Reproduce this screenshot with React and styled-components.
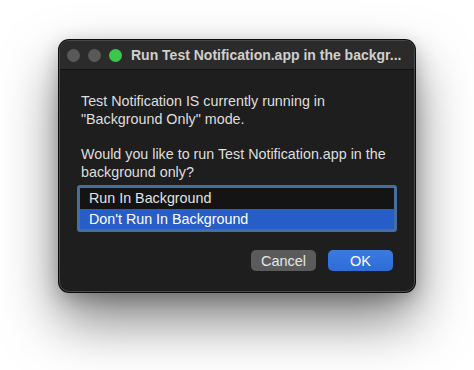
import styled, { createGlobalStyle } from "styled-components";

const GlobalStyle = createGlobalStyle`
  html, body {
    margin: 0;
    background: #ffffff;
  }
  body {
    font-family: "Liberation Sans", Arial, sans-serif;
  }
`;

const options = ["Run In Background", "Don't Run In Background"];

function App() {
  return (
    <Page>
      <GlobalStyle />
      <Window>
        <TitleBar>
          <Lights>
            <Light />
            <Light />
            <Light color="#3ec64c" />
          </Lights>
          <Title>Run Test Notification.app in the backgr...</Title>
        </TitleBar>
        <Body>
          <Message>
            Test Notification IS currently running in
            <br />
            "Background Only" mode.
          </Message>
          <Message>
            Would you like to run Test Notification.app in the
            <br />
            background only?
          </Message>
          <List>
            {options.map((opt, i) => (
              <Row key={opt} selected={i === 1}>
                {opt}
              </Row>
            ))}
          </List>
          <Buttons>
            <Button>Cancel</Button>
            <Button primary>OK</Button>
          </Buttons>
        </Body>
      </Window>
    </Page>
  );
}

export default App;

const Page = styled.div`
  width: 474px;
  height: 370px;
  padding: 40px 0 0 59px;
  box-sizing: border-box;
  overflow: hidden;
`;

const Window = styled.div`
  width: 356px;
  height: 252px;
  box-sizing: border-box;
  background: #1e1e1e;
  border-radius: 10px;
  border: 1px solid #4a4a4a;
  box-shadow: 0 0 0 1px #0c0c0c, 0 28px 55px rgba(0, 0, 0, 0.5),
    0 6px 20px rgba(0, 0, 0, 0.25);
  overflow: hidden;
  display: flex;
  flex-direction: column;
`;

const TitleBar = styled.div`
  height: 28px;
  flex-shrink: 0;
  display: flex;
  align-items: center;
  padding-left: 7px;
  background: #2b2b2b;
  border-bottom: 1px solid #111;
`;

const Lights = styled.div`
  display: flex;
  gap: 8px;
  margin-right: 9px;
`;

const Light = styled.span`
  width: 13px;
  height: 13px;
  border-radius: 50%;
  background: ${(p) => p.color || "#595959"};
`;

const Title = styled.div`
  font-size: 14px;
  font-weight: bold;
  color: #cfcfcf;
  white-space: nowrap;
`;

const Body = styled.div`
  flex: 1;
  display: flex;
  flex-direction: column;
  padding: 22px 17px 0 17px;
`;

const Message = styled.p`
  margin: 0 0 17px 4px;
  font-size: 14.3px;
  line-height: 18px;
  color: #dedede;
  &:last-of-type {
    margin-bottom: 4px;
  }
`;

const List = styled.div`
  display: flex;
  flex-direction: column;
  border: 3px solid #456f9f;
  border-radius: 3px;
  background: #141414;
`;

const Row = styled.div`
  height: 20.5px;
  line-height: 20.5px;
  padding-left: 9px;
  font-size: 14.3px;
  color: ${(p) => (p.selected ? "#ffffff" : "#e2e2e2")};
  background: ${(p) => (p.selected ? "#275dc6" : "transparent")};
`;

const Buttons = styled.div`
  display: flex;
  justify-content: flex-end;
  gap: 12px;
  margin-top: 18px;
  padding-right: 4px;
`;

const Button = styled.button`
  width: 65px;
  height: 21px;
  border: none;
  border-radius: 5px;
  font-family: "Liberation Sans", Arial, sans-serif;
  font-size: 14.5px;
  color: ${(p) => (p.primary ? "#ffffff" : "#e6e6e6")};
  background: ${(p) =>
    p.primary ? "linear-gradient(#3a7be0, #2e6cd6)" : "#5b5b5b"};
  padding: 0;
`;
